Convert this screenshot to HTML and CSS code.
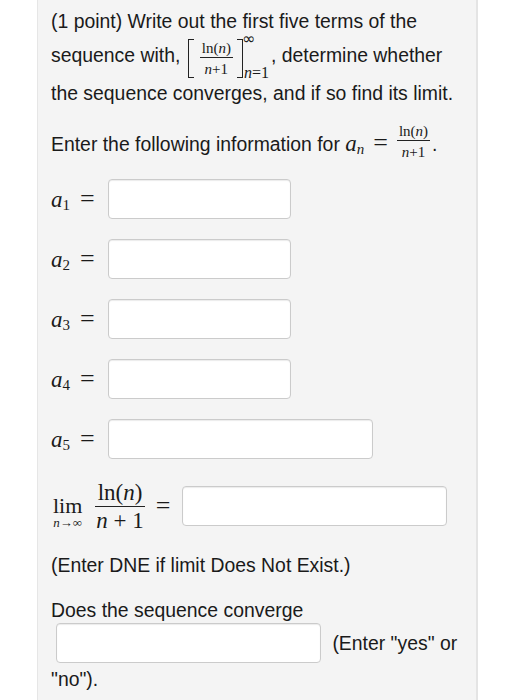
FILE: index.html
```html
<!DOCTYPE html>
<html>
<head>
<meta charset="utf-8">
<link rel="stylesheet" href="styles.css">
</head>
<body>
<div class="panel">
  <p class="intro">(1 point) Write out the first five terms of the sequence with, <span class="seq"><span class="brk left"></span><span class="frac small"><span class="num">ln(<i>n</i>)</span><span class="den"><i>n</i>+1</span></span><span class="brk right"></span><span class="lims"><span class="sup">∞</span><span class="sub"><i>n</i>=1</span></span></span>, determine whether the sequence converges, and if so find its limit.</p>

  <p class="info">Enter the following information for <span class="math"><i>a</i><sub><i>n</i></sub></span><span class="math eqs">=</span><span class="frac small inline"><span class="num">ln(<i>n</i>)</span><span class="den"><i>n</i>+1</span></span>.</p>

  <div class="terms">
    <div class="term"><span class="math lbl"><i>a</i><sub>1</sub></span><span class="math eq">=</span><input class="ans" type="text"></div>
    <div class="term"><span class="math lbl"><i>a</i><sub>2</sub></span><span class="math eq">=</span><input class="ans" type="text"></div>
    <div class="term"><span class="math lbl"><i>a</i><sub>3</sub></span><span class="math eq">=</span><input class="ans" type="text"></div>
    <div class="term"><span class="math lbl"><i>a</i><sub>4</sub></span><span class="math eq">=</span><input class="ans" type="text"></div>
    <div class="term"><span class="math lbl"><i>a</i><sub>5</sub></span><span class="math eq">=</span><input class="ans wide" type="text"></div>
  </div>

  <div class="limit">
    <span class="math limop"><span class="lim">lim</span><span class="under"><i>n</i>→∞</span></span>
    <span class="math frac big"><span class="num">ln(<i>n</i>)</span><span class="den"><i>n</i> + 1</span></span>
    <span class="math eq2">=</span>
    <input class="ans wide" type="text">
  </div>

  <p class="note">(Enter DNE if limit Does Not Exist.)</p>

  <p class="conv">Does the sequence converge <input class="ans wide inl" type="text"> (Enter "yes" or "no").</p>
</div>
</body>
</html>
```

FILE: styles.css
```css
html, body {
  margin: 0;
  padding: 0;
  background: #ffffff;
}

body {
  font-family: "Liberation Sans", Arial, sans-serif;
  font-size: 19.4px;
  color: #1a1a1a;
}

.panel {
  margin-left: 37px;
  width: 412px;
  min-height: 700px;
  padding: 8px 13px 0 13px;
  box-sizing: content-box;
  background: #f4f4f4;
  border-left: 1px solid #e6e6e6;
  border-right: 2px solid #e4e4e4;
}

p {
  margin: 0;
  line-height: 26px;
}

.math {
  font-family: "Liberation Serif", "Times New Roman", serif;
}

i {
  font-style: italic;
}

/* sequence bracket notation */
.seq {
  display: inline-flex;
  align-items: center;
  vertical-align: middle;
  font-family: "Liberation Serif", "Times New Roman", serif;
  margin: 0 2px 0 2px;
  position: relative;
  top: 1px;
}

.brk {
  display: inline-block;
  width: 5px;
  height: 37px;
  border: 1.6px solid #222;
}

.brk.left {
  border-right: none;
}

.brk.right {
  border-left: none;
}

.frac {
  display: inline-flex;
  flex-direction: column;
  align-items: center;
  font-family: "Liberation Serif", "Times New Roman", serif;
}

.frac .num {
  border-bottom: 1px solid #222;
  padding: 0 1px;
  width: 100%;
  text-align: center;
  white-space: nowrap;
}

.frac .den {
  text-align: center;
  white-space: nowrap;
}

.frac.small {
  font-size: 15px;
  line-height: 16px;
  margin: 0 5px 0 7px;
}

.frac.small .num {
  padding-bottom: 1px;
}

.frac.small .den {
  padding-top: 3px;
}

.frac.inline {
  vertical-align: middle;
  margin: 0 3px 0 10px;
  position: relative;
  top: -4px;
}

.lims {
  display: inline-flex;
  flex-direction: column;
  justify-content: space-between;
  height: 46px;
  font-size: 16px;
  line-height: 16px;
  margin-left: 0;
}

.sup {
  font-family: "DejaVu Sans", sans-serif;
  font-size: 16px;
  position: relative;
  left: -1px;
  top: -4px;
}

.sub {
  padding-left: 1px;
}

.info .math {
  font-size: 23px;
}

.info sub {
  font-size: 15px;
  vertical-align: -3px;
}

.info .eqs {
  font-size: 26px;
  margin-left: 9px;
}

.info {
  margin-top: 21px;
}

/* term rows */
.terms {
  display: flex;
  flex-direction: column;
  gap: 20px;
  margin-top: 15px;
}

.term {
  display: flex;
  align-items: center;
  height: 40px;
}

.lbl {
  font-size: 23px;
  width: 29px;
  position: relative;
  top: 1px;
}

.lbl sub {
  font-size: 15px;
  vertical-align: -3px;
}

.eq {
  font-size: 26px;
  width: 28px;
}

.ans {
  display: inline-block;
  width: 183px;
  height: 40px;
  box-sizing: border-box;
  border: 1px solid #cbcbcb;
  border-radius: 4px;
  background: #ffffff;
  box-shadow: inset 0 1px 1px rgba(0, 0, 0, 0.08);
  margin: 0;
  padding: 4px 6px;
  font: inherit;
}

.ans.wide {
  width: 265px;
}

/* limit row */
.limit {
  display: flex;
  align-items: center;
  margin-top: 27px;
  height: 40px;
}

.limop {
  display: inline-flex;
  flex-direction: column;
  align-items: center;
  margin-left: 2px;
  position: relative;
  top: 7px;
}

.lim {
  font-size: 22px;
  line-height: 20px;
}

.under {
  font-size: 13px;
  line-height: 14px;
}

.frac.big {
  font-size: 23px;
  line-height: 24px;
  margin-left: 14px;
  position: relative;
  top: 1px;
}

.frac.big .num {
  padding-bottom: 1px;
}

.frac.big .den {
  padding-top: 2px;
}

.eq2 {
  font-size: 26px;
  margin-left: 12px;
  margin-right: 11px;
}

.note {
  margin-top: 26px;
}

.conv {
  margin-top: 19px;
}

.ans.inl {
  vertical-align: middle;
  margin: 0 6px 3px 5px;
}
```
